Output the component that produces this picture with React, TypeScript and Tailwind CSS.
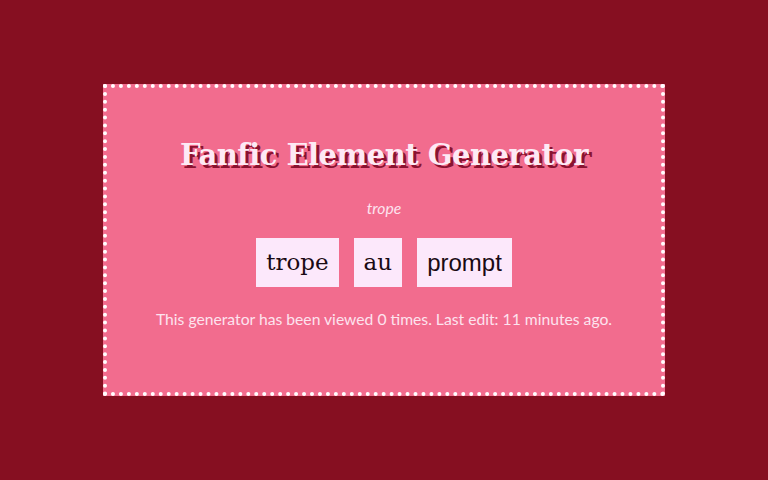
const buttons = [
  { label: "trope", font: "font-['DejaVu_Serif',serif] text-[23px] px-[10px]" },
  { label: "au", font: "font-['DejaVu_Serif',serif] text-[23px] px-[10px]" },
  { label: "prompt", font: "font-['Liberation_Sans',sans-serif] text-[24px] px-[10px]" },
];

export default function App() {
  return (
    <div className="flex h-[480px] w-[768px] items-center justify-center bg-[#860f21] font-['Lato',sans-serif]">
      <div className="flex h-[312px] w-[562px] flex-col items-center border-4 border-dotted border-white bg-[#f26c8e] pt-[47px]">
        <h1 className="font-['DejaVu_Serif',serif] text-[29px] font-bold leading-[40px] tracking-[-0.5px] text-[#fdeaf5] [text-shadow:3px_3px_0_#8a1230]">
          Fanfic Element Generator
        </h1>
        <p className="mt-[22px] text-[15.7px] italic leading-[22px] text-[#fde3ee]">trope</p>
        <div className="mt-[19px] flex items-center gap-[15px]">
          {buttons.map((b) => (
            <button key={b.label} className={`h-[49px] bg-[#fce8fb] text-[#1a0a14] ${b.font}`}>
              {b.label}
            </button>
          ))}
        </div>
        <p className="mt-[21px] text-[15.7px] leading-[22px] text-[#fde3ee]">
          This generator has been viewed 0 times. Last edit: 11 minutes ago.
        </p>
      </div>
    </div>
  );
}
